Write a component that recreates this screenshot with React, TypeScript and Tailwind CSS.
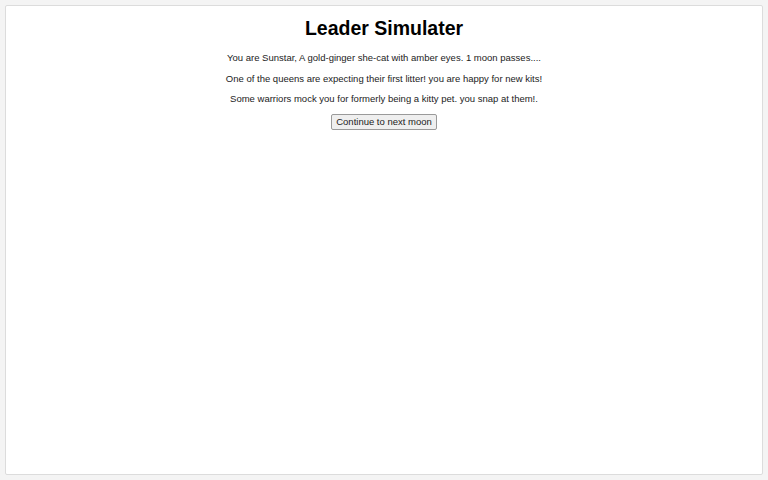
import { useState } from 'react';

const events = [
  'One of the queens are expecting their first litter! you are happy for new kits!',
  'Some warriors mock you for formerly being a kitty pet. you snap at them!.',
];

export default function App() {
  const [moon, setMoon] = useState(1);

  return (
    <div className="h-[480px] w-[768px] bg-[#f4f4f4] p-[5px] font-['Liberation_Sans',Arial,sans-serif] text-black">
      <div className="flex h-full flex-col items-center rounded-[2px] border border-[#dcdcdc] bg-white pt-[10px]">
        <h1 className="text-[19.5px] font-bold leading-[24px]">Leader Simulater</h1>
        <p className="mt-[12px] text-[9.5px] leading-[12px] text-[#222]">
          You are Sunstar, A gold-ginger she-cat with amber eyes. {moon} moon passes....
        </p>
        {events.map((e) => (
          <p key={e} className="mt-[8.5px] text-[9.5px] leading-[12px] text-[#222]">{e}</p>
        ))}
        <button
          onClick={() => setMoon(moon + 1)}
          className="mt-[8.5px] rounded-[2px] border border-[#9a9a9a] bg-[#efefef] px-[4px] py-[1px] text-[9.5px] leading-[12px] text-[#222]"
        >
          Continue to next moon
        </button>
      </div>
    </div>
  );
}
